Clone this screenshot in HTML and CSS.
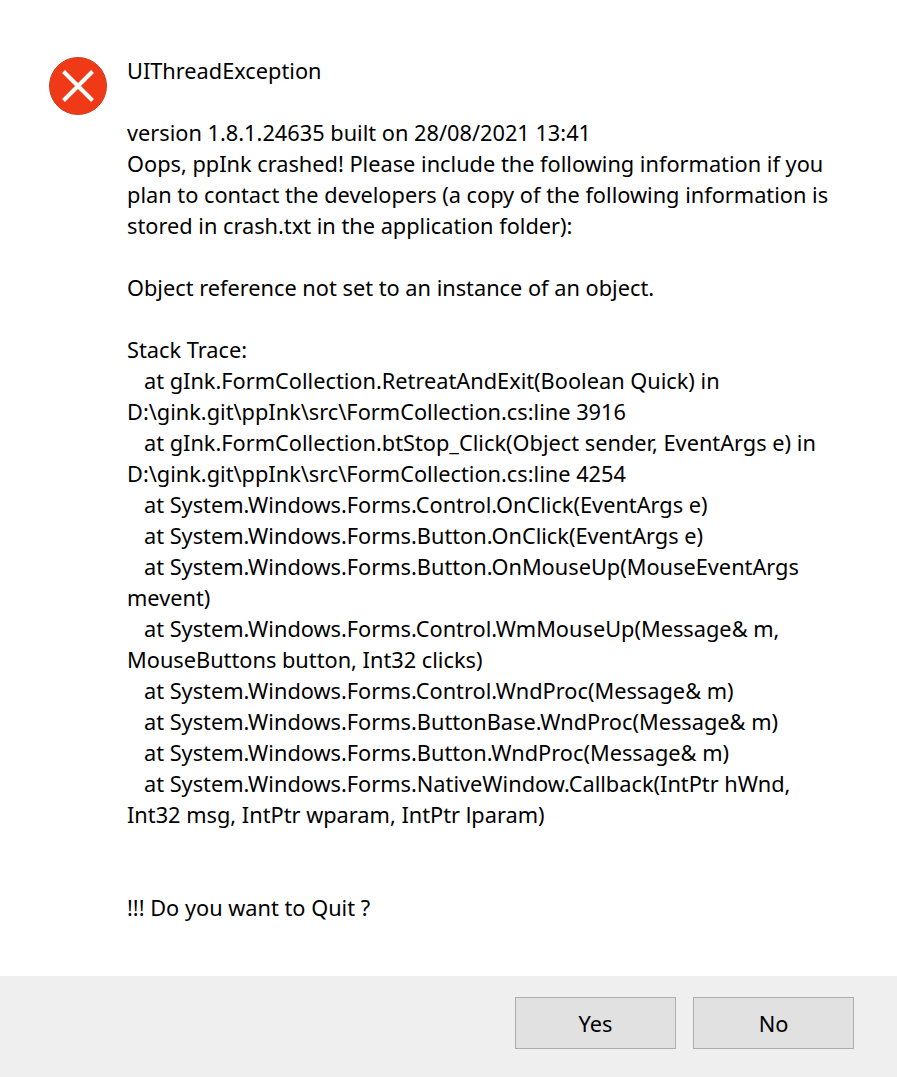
FILE: index.html
```html
<!DOCTYPE html>
<html lang="en">

<head>
    <meta charset="UTF-8">
    <title>UIThreadException</title>
    <link rel="stylesheet" href="styles.css">
</head>

<body>
    <div class="dialog">
        <div class="content">
            <svg class="error-icon" width="58" height="58" viewBox="0 0 58 58">
                <circle cx="29" cy="29" r="28.5" fill="#f03a17" stroke="#c9401f" stroke-width="1" />
                <path d="M14.5 14.5 L43.5 43.5 M43.5 14.5 L14.5 43.5" stroke="#fff" stroke-width="4" fill="none" />
            </svg>
            <div class="message">UIThreadException

version 1.8.1.24635 built on 28/08/2021 13:41
Oops, ppInk crashed! Please include the following information if you
plan to contact the developers (a copy of the following information is
stored in crash.txt in the application folder):

Object reference not set to an instance of an object.

Stack Trace:
   at gInk.FormCollection.RetreatAndExit(Boolean Quick) in
D:\gink.git\ppInk\src\FormCollection.cs:line 3916
   at gInk.FormCollection.btStop_Click(Object sender, EventArgs e) in
D:\gink.git\ppInk\src\FormCollection.cs:line 4254
   at System.Windows.Forms.Control.OnClick(EventArgs e)
   at System.Windows.Forms.Button.OnClick(EventArgs e)
   at System.Windows.Forms.Button.OnMouseUp(MouseEventArgs
mevent)
   at System.Windows.Forms.Control.WmMouseUp(Message&amp; m,
MouseButtons button, Int32 clicks)
   at System.Windows.Forms.Control.WndProc(Message&amp; m)
   at System.Windows.Forms.ButtonBase.WndProc(Message&amp; m)
   at System.Windows.Forms.Button.WndProc(Message&amp; m)
   at System.Windows.Forms.NativeWindow.Callback(IntPtr hWnd,
Int32 msg, IntPtr wparam, IntPtr lparam)


!!! Do you want to Quit ?</div>
        </div>
        <div class="footer">
            <button class="btn">Yes</button>
            <button class="btn">No</button>
        </div>
    </div>
</body>

</html>
```

FILE: styles.css
```css
html,
body {
    height: 100%;
    margin: 0;
}

body {
    background-color: #fff;
    color: #000;
    font-family: "Noto Sans", "Open Sans", sans-serif;
    font-size: 21.75px;
    overflow: hidden;
}

.dialog {
    height: 100%;
    display: flex;
    flex-direction: column;
}

.content {
    flex: 1;
    display: flex;
    align-items: flex-start;
    gap: 20px;
    padding: 55px 0 0 49px;
}

.error-icon {
    flex: none;
    margin-top: 2px;
}

.message {
    white-space: pre;
    line-height: 31px;
}

.footer {
    height: 101px;
    box-sizing: border-box;
    padding: 21px 43px 0 0;
    background-color: #efefef;
    display: flex;
    justify-content: flex-end;
    align-items: flex-start;
    gap: 17px;
}

.btn {
    width: 161px;
    height: 52px;
    background-color: #e1e1e1;
    border: 1px solid #adadad;
    color: #000;
    font: inherit;
    padding: 0;
}
```
